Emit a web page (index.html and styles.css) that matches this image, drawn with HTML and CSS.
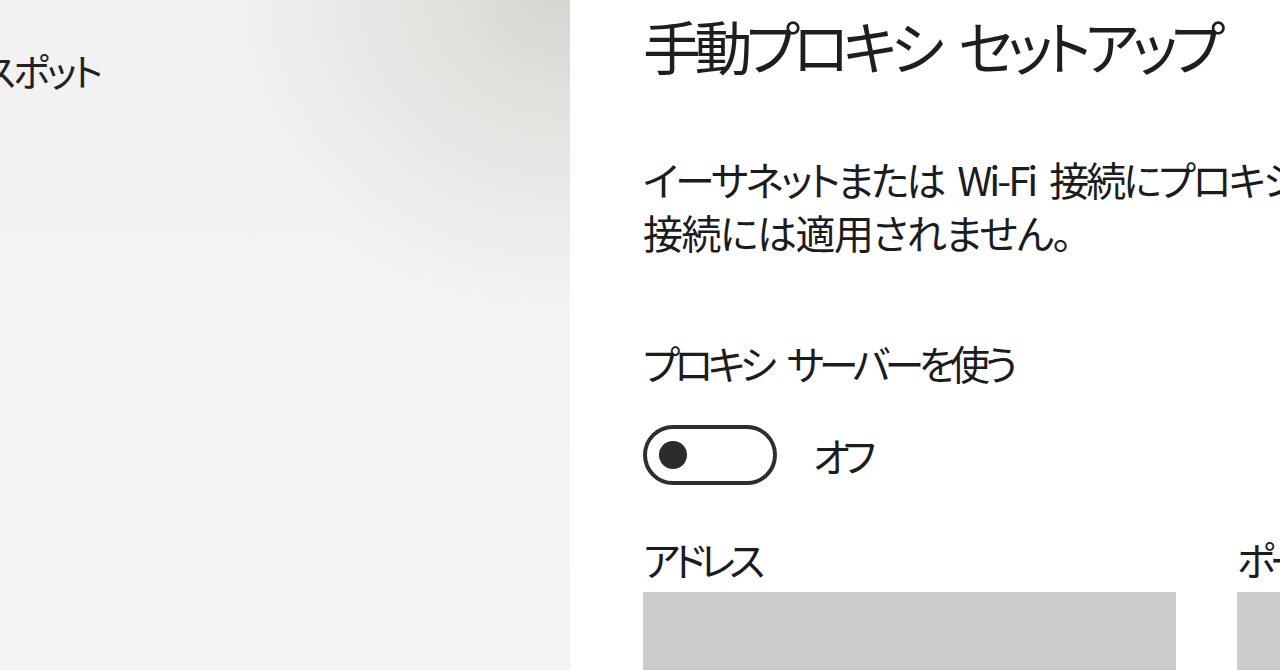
FILE: index.html
```html
<!DOCTYPE html>
<html lang="ja">
<head>
<meta charset="utf-8">
<title>手動プロキシ セットアップ</title>
<link rel="stylesheet" href="styles.css">
</head>
<body>
<div class="app">
  <nav class="sidebar">
    <div class="nav-item">スポット</div>
  </nav>
  <main class="content">
    <h1 class="title">手動プロキシ セットアップ</h1>
    <p class="desc"><span class="desc-line desc-line-1">イーサネットまたは Wi-Fi 接続にプロキシ サーバーを使います。これらの設定は VPN</span><span class="desc-line desc-line-2">接続には適用されません。</span></p>
    <div class="label">プロキシ サーバーを使う</div>
    <div class="toggle-row">
      <div class="toggle"><span class="knob"></span></div>
      <span class="toggle-text">オフ</span>
    </div>
    <div class="fields">
      <div class="field field-address">
        <div class="field-label">アドレス</div>
        <div class="input"></div>
      </div>
      <div class="field field-port">
        <div class="field-label">ポート</div>
        <div class="input"></div>
      </div>
    </div>
  </main>
</div>
</body>
</html>
```
FILE: styles.css
```css
html, body {
  margin: 0;
  padding: 0;
  width: 1280px;
  height: 670px;
  overflow: hidden;
  background: #ffffff;
}
body {
  font-family: "Noto Sans CJK JP", "Noto Sans", sans-serif;
  font-feature-settings: "palt";
  color: #1c1c1c;
}
.app {
  display: flex;
  width: 1280px;
  height: 670px;
}
.sidebar {
  width: 570px;
  flex: none;
  height: 670px;
  overflow: hidden;
  background:
    radial-gradient(ellipse 340px 320px at 560px -10px, rgba(213,212,207,1) 0%, rgba(222,221,217,0.8) 35%, rgba(240,240,239,0) 100%),
    linear-gradient(180deg, #f2f2f2 0%, #f4f4f4 100%);
}
.nav-item {
  margin-top: 43px;
  margin-left: -18px;
  font-size: 38px;
  line-height: 53px;
  letter-spacing: -3px;
  white-space: nowrap;
  color: #222;
}
.content {
  flex: 1;
  min-width: 0;
  padding: 10px 0 0 73px;
  overflow: hidden;
}
.title {
  margin: 0;
  font-size: 58px;
  font-weight: 400;
  line-height: 70px;
  letter-spacing: -6.5px;
  word-spacing: 14px;
  white-space: nowrap;
  color: #1e1e1e;
}
.desc {
  margin: 73px 0 0;
  font-size: 40px;
  line-height: 53px;
  white-space: nowrap;
}
.desc-line {
  display: block;
}
.desc-line-1 {
  letter-spacing: -3px;
  word-spacing: 8px;
}
.desc-line-2 {
  letter-spacing: -1.5px;
}
.label {
  margin-top: 78px;
  font-size: 40px;
  line-height: 53px;
  letter-spacing: -5.5px;
  word-spacing: 12px;
  white-space: nowrap;
}
.toggle-row {
  margin-top: 35px;
  display: flex;
  align-items: center;
  gap: 36px;
}
.toggle {
  box-sizing: border-box;
  width: 134px;
  height: 60px;
  border: 4px solid #2e2e2e;
  border-radius: 30px;
  display: flex;
  align-items: center;
  padding-left: 12px;
}
.knob {
  width: 28px;
  height: 28px;
  border-radius: 50%;
  background: #2b2b2b;
}
.toggle-text {
  font-size: 40px;
  line-height: 53px;
  letter-spacing: -7px;
}
.fields {
  margin-top: 48px;
  display: flex;
  gap: 61px;
}
.field-label {
  font-size: 40px;
  line-height: 53px;
  letter-spacing: -6px;
  white-space: nowrap;
}
.input {
  margin-top: 6px;
  height: 90px;
  background: #cccccc;
}
.field-address {
  width: 533px;
  flex: none;
}
.field-port {
  width: 200px;
  flex: none;
}
```
